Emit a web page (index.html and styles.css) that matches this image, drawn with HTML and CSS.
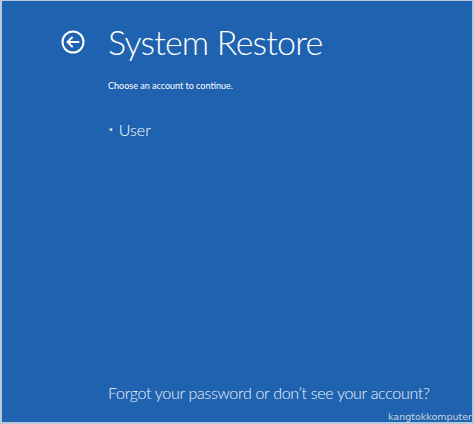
FILE: index.html
```html
<!DOCTYPE html>
<html>
<head>
<meta charset="utf-8">
<link rel="stylesheet" href="styles.css">
</head>
<body>
<div class="frame">
  <div class="screen">
    <header class="head">
      <svg class="back" width="26" height="26" viewBox="0 0 26 26">
        <circle cx="13" cy="13" r="10.5" fill="none" stroke="#fff" stroke-width="2"/>
        <path d="M7.5 13 H18.5 M12 8.5 L7.5 13 L12 17.5" fill="none" stroke="#fff" stroke-width="2" stroke-linecap="round" stroke-linejoin="round"/>
      </svg>
      <h1 class="title">System Restore</h1>
    </header>
    <div class="body">
      <p class="prompt">Choose an account to continue.</p>
      <ul class="accounts">
        <li class="account">User</li>
      </ul>
    </div>
    <p class="forgot">Forgot your password or don’t see your account?</p>
    <span class="mark">kangtokkomputer</span>
  </div>
</div>
</body>
</html>
```
FILE: styles.css
```css
html, body {
  margin: 0;
  padding: 0;
  background: #b4c6dc;
}
.frame {
  width: 474px;
  height: 424px;
  box-sizing: border-box;
  padding: 1px 2px 2px 2px;
  background: #b7c8dc;
}
.screen {
  position: relative;
  height: 100%;
  background: #1f62b0;
  color: #fff;
  font-family: "Lato", "Liberation Sans", sans-serif;
  display: flex;
  flex-direction: column;
  padding-left: 58px;
  box-sizing: border-box;
}
.head {
  display: flex;
  align-items: center;
  gap: 22px;
  margin-top: 21px;
}
.back {
  display: block;
}
.title {
  margin: 0;
  font-weight: 300;
  font-size: 34px;
  line-height: 40px;
  letter-spacing: -0.8px;
}
.body {
  padding-left: 48px;
}
.prompt {
  margin: 19px 0 0 0;
  font-size: 9px;
  line-height: 10px;
}
.accounts {
  list-style: none;
  margin: 28px 0 0 0;
  padding: 0;
}
.account {
  font-size: 16px;
  font-weight: 300;
  line-height: 20px;
}
.account::before {
  content: "•";
  font-size: 10px;
  margin-right: 5px;
  vertical-align: 3px;
  color: #c8d8ee;
}
.forgot {
  margin: auto 0 19px 48px;
  font-size: 16px;
  font-weight: 300;
  line-height: 20px;
  letter-spacing: -0.3px;
  color: #eef3fa;
}
.mark {
  position: absolute;
  right: 0;
  bottom: 0;
  font-family: "DejaVu Sans", sans-serif;
  font-size: 9.5px;
  line-height: 11px;
  color: #c9d2de;
}
```
